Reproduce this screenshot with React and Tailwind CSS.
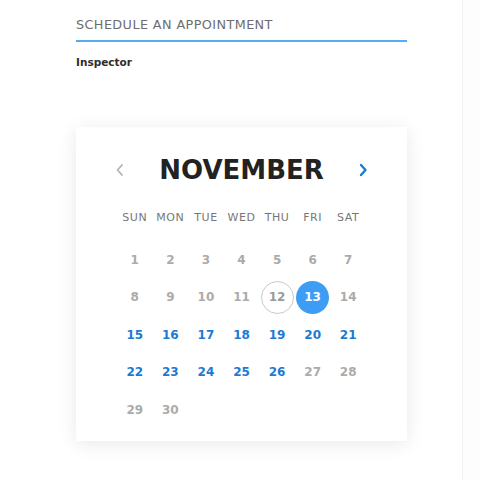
import React from 'react';

const DAYS = ['SUN', 'MON', 'TUE', 'WED', 'THU', 'FRI', 'SAT'];
const TODAY = 12;
const SELECTED = 13;
const OPEN = [15, 16, 17, 18, 19, 20, 21, 22, 23, 24, 25, 26];

function Chevron({ dir, className }) {
  return (
    <svg width="10" height="14" viewBox="0 0 10 14" className={className} fill="none">
      {dir === 'left'
        ? <polyline points="7,2 2.5,7 7,12" stroke="currentColor" strokeWidth="1.8" strokeLinecap="round" strokeLinejoin="round" />
        : <polyline points="3,2 7.5,7 3,12" stroke="currentColor" strokeWidth="2.4" strokeLinecap="round" strokeLinejoin="round" />}
    </svg>
  );
}

function DayCell({ day }) {
  if (day === SELECTED) {
    return (
      <div className="w-[33px] h-[33px] rounded-full bg-[#3d9df5] text-white font-bold flex items-center justify-center">
        {day}
      </div>
    );
  }
  if (day === TODAY) {
    return (
      <div className="w-[33px] h-[33px] rounded-full border border-[#c8c8c8] text-[#9a9a9a] font-semibold flex items-center justify-center">
        {day}
      </div>
    );
  }
  const open = OPEN.includes(day);
  return (
    <span className={open ? 'text-[#1c7ad2] font-bold' : 'text-[#ababab] font-semibold'}>{day}</span>
  );
}

export default function App() {
  const days = Array.from({ length: 30 }, (_, i) => i + 1);

  return (
    <div className="w-[480px] h-[480px] flex bg-white overflow-hidden" style={{ fontFamily: '"DejaVu Sans", sans-serif' }}>
      <div className="w-[462px] flex flex-col pl-[76px] pt-[17px]">
        {/* Section title */}
        <p className="w-[331px] text-[12.8px] leading-[16px] tracking-[0.4px] text-[#6d6d6d] pb-[7px] border-b-2 border-[#56abf2]">
          SCHEDULE AN APPOINTMENT
        </p>
        <p className="mt-[13px] text-[10.5px] leading-[14px] font-bold text-[#2d2d2d]">Inspector</p>

        {/* Calendar card */}
        <div className="mt-[58px] w-[331px] h-[314px] bg-white shadow-[0_3px_18px_rgba(0,0,0,0.09)] flex flex-col">
          <div className="flex items-center justify-between px-[39px] pt-[28px] h-[58px]">
            <Chevron dir="left" className="text-[#b3b3b3]" />
            <h2 className="text-[26px] leading-[30px] font-bold text-[#222]">NOVEMBER</h2>
            <Chevron dir="right" className="text-[#1c7ad2]" />
          </div>

          <div className="grid grid-cols-7 px-[41px] mt-[25px]">
            {DAYS.map(d => (
              <span key={d} className="text-center text-[11px] leading-[16px] tracking-[0.6px] text-[#777]">{d}</span>
            ))}
          </div>

          <div className="grid grid-cols-7 auto-rows-[37.5px] px-[41px] mt-[15px] text-[12px]">
            {days.map(d => (
              <div key={d} className="flex items-center justify-center">
                <DayCell day={d} />
              </div>
            ))}
          </div>
        </div>
      </div>
      <div className="flex-1 border-l border-[#f2f2f2] bg-[#fdfdfd]" />
    </div>
  );
}
